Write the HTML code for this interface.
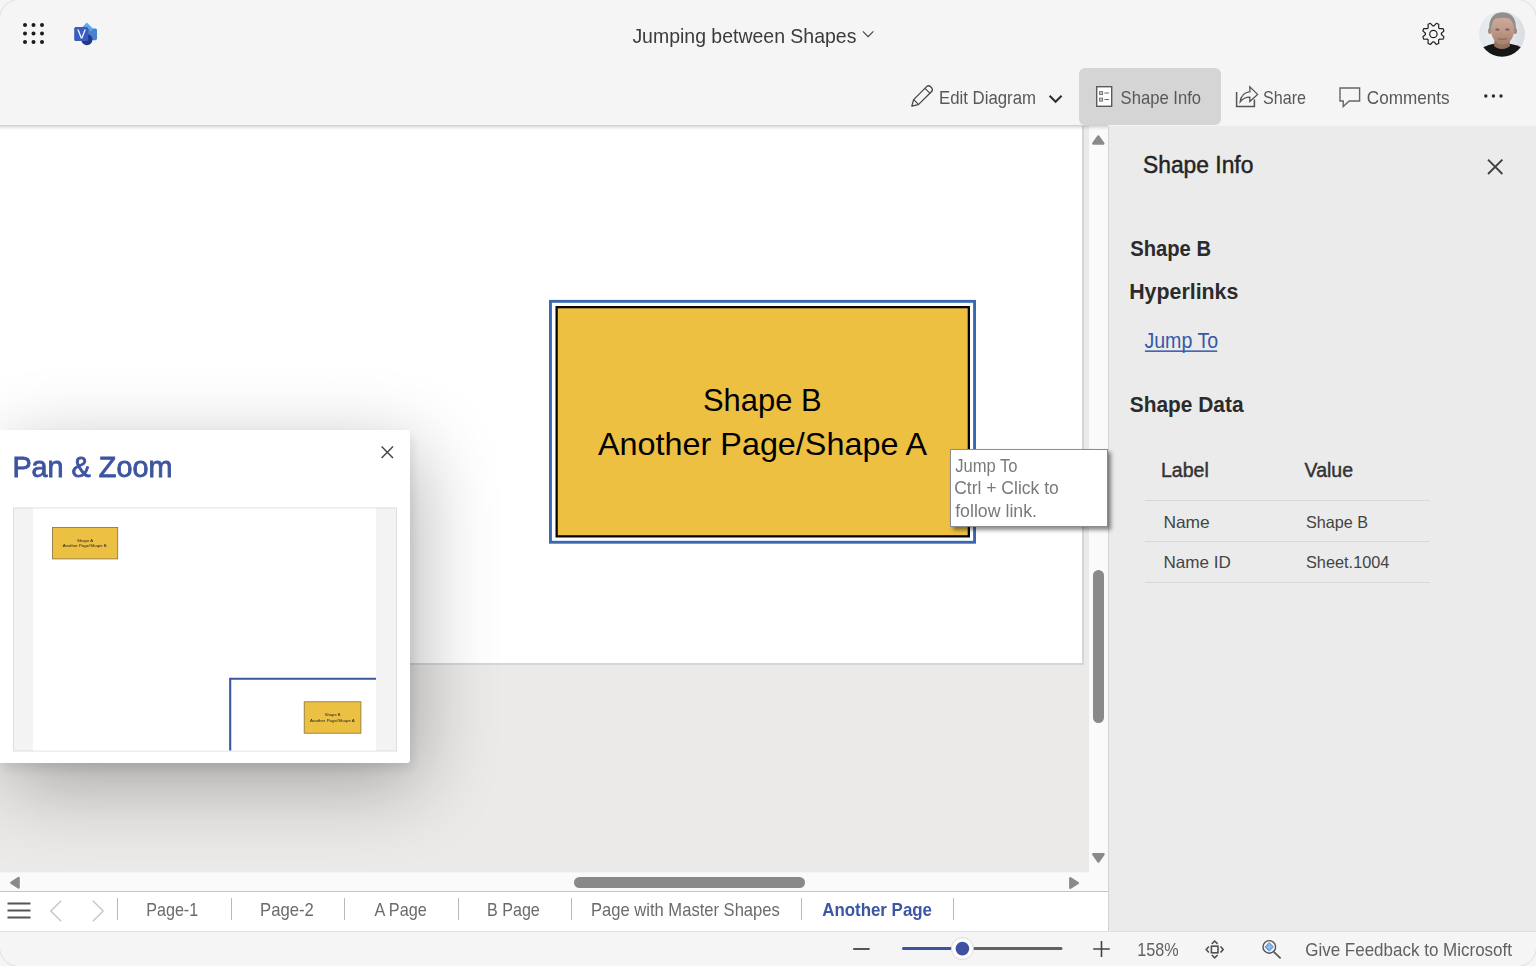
<!DOCTYPE html>
<html><head><meta charset="utf-8"><title>Jumping between Shapes - Visio</title><style>
*{margin:0;padding:0;box-sizing:border-box}
html,body{width:1536px;height:966px;overflow:hidden;background:#f5f5f5;font-family:"Liberation Sans",sans-serif}
.abs{position:absolute}
.lay{position:absolute;overflow:visible}
svg text{font-family:"Liberation Sans",sans-serif}
</style></head><body>
<div class="abs" style="left:1078.5px;top:68px;width:142.5px;height:57px;background:#d5d5d5;border-radius:6px"></div>
<div class="abs" style="left:0;top:126px;width:1089px;height:746px;background:#ebeae8"></div>
<div class="abs" style="left:0;top:126px;width:1084.3px;height:538.6px;background:#fff;border-right:2px solid #d6d6d6;border-bottom:2px solid #d6d6d6"></div>
<div class="abs" style="left:1089px;top:126px;width:19px;height:765px;background:#fafafa"></div>
<div class="abs" style="left:1092.6px;top:570.2px;width:11.6px;height:152.8px;background:#898989;border-radius:6px"></div>
<div class="abs" style="left:0;top:872.6px;width:1108px;height:19px;background:#fafafa"></div>
<div class="abs" style="left:574.1px;top:876.7px;width:230.5px;height:11.1px;background:#898989;border-radius:6px"></div>
<div class="abs" style="left:0;top:125px;width:1108px;height:5px;background:linear-gradient(#dadada 0,#dadada 1px,#e1e1e1 1px,#e1e1e1 2px,#ebebeb 2px,#ebebeb 3px,#f4f4f4 3px,#f4f4f4 4px,#fbfbfb 4px,#fbfbfb 5px);mix-blend-mode:multiply"></div>
<svg class="lay" style="left:0px;top:126px" width="1089" height="746" viewBox="0 126 1089 746"><rect x="550.45" y="301.35" width="424.1" height="240.9" fill="none" stroke="#3a68b0" stroke-width="2.9"/><rect x="556.65" y="307.15" width="412.2" height="229.2" fill="#edc042" stroke="#050505" stroke-width="2.3"/>
<text x="703.00" y="410.82" font-size="31.40" font-weight="normal" fill="#000000" textLength="118.60" lengthAdjust="spacingAndGlyphs">Shape B</text>
<text x="598.00" y="454.85" font-size="31.40" font-weight="normal" fill="#000000" textLength="329.20" lengthAdjust="spacingAndGlyphs">Another Page/Shape A</text></svg>
<svg class="lay" style="left:0;top:0" width="1536" height="966"><path d="M1093.3,143.5 L1103.3,143.5 L1098.3,136.4 Z" fill="#8a8a8a" stroke="#8a8a8a" stroke-width="2.4" stroke-linejoin="round"/><path d="M1093.3,854.2 L1103.5,854.2 L1098.4,861.6 Z" fill="#8a8a8a" stroke="#8a8a8a" stroke-width="2.4" stroke-linejoin="round"/><path d="M11.3,882.8 L18.6,878.1 L18.6,887.6 Z" fill="#8a8a8a" stroke="#8a8a8a" stroke-width="2.4" stroke-linejoin="round"/><path d="M1077.8,883 L1070.3,878.3 L1070.3,887.7 Z" fill="#8a8a8a" stroke="#8a8a8a" stroke-width="2.4" stroke-linejoin="round"/></svg>
<div class="abs" style="left:0;top:429.6px;width:410px;height:333px;background:#fff;border-radius:0 3px 3px 0;box-shadow:8px 22px 80px rgba(0,0,0,0.30),2px 6px 12px rgba(0,0,0,0.10)"></div>
<svg class="lay" style="left:0px;top:429px" width="411" height="334" viewBox="0 429 411 334"><rect x="13.5" y="508" width="383" height="243" fill="#f3f3f3" stroke="#dedede" stroke-width="1"/><rect x="33" y="508.5" width="343" height="242" fill="#fff"/><rect x="52.4" y="527.4" width="65.3" height="31.5" fill="#ecc043" stroke="#857040" stroke-width="0.8"/><text x="77" y="541.6" font-size="4.4" fill="#1a1a1a" textLength="16" lengthAdjust="spacingAndGlyphs">Shape A</text><text x="62.7" y="547.4" font-size="4.4" fill="#1a1a1a" textLength="44" lengthAdjust="spacingAndGlyphs">Another Page/Shape B</text><rect x="304.2" y="701.8" width="56.7" height="31.4" fill="#ecc043" stroke="#857040" stroke-width="0.8"/><text x="324.8" y="716.4" font-size="4.4" fill="#1a1a1a" textLength="15.8" lengthAdjust="spacingAndGlyphs">Shape B</text><text x="310" y="722" font-size="4.4" fill="#1a1a1a" textLength="44.8" lengthAdjust="spacingAndGlyphs">Another Page/Shape A</text><path d="M230.2,750.5 V678.8 H376" fill="none" stroke="#3b57a2" stroke-width="2.1"/><path d="M381.6,446.6 L393,458 M393,446.6 L381.6,458" stroke="#444" stroke-width="1.45"/>
<text x="12.40" y="477.20" font-size="29.07" font-weight="normal" fill="#3d55a0" stroke="#3d55a0" stroke-width="0.85" textLength="160.00" lengthAdjust="spacingAndGlyphs">Pan &amp; Zoom</text></svg>
<div class="abs" style="left:1108px;top:126px;width:428px;height:805px;background:#ebebeb;border-left:1px solid #d4d4d4"></div>
<svg class="lay" style="left:1108px;top:126px" width="428" height="805" viewBox="1108 126 428 805"><path d="M1488,159.6 L1502.4,174 M1502.4,159.6 L1488,174" stroke="#404040" stroke-width="1.9"/><rect x="1144.9" y="350.4" width="72.3" height="1.5" fill="#3559a8"/><path d="M1145,500.5 H1430 M1145,541.5 H1430 M1145,582.5 H1430" stroke="#d8d8d8" stroke-width="1"/>
<text x="1143.00" y="172.55" font-size="23.55" font-weight="normal" fill="#242424" stroke="#242424" stroke-width="0.45" textLength="110.40" lengthAdjust="spacingAndGlyphs">Shape Info</text>
<text x="1130.20" y="255.58" font-size="21.80" font-weight="bold" fill="#2b2b2b" textLength="80.80" lengthAdjust="spacingAndGlyphs">Shape B</text>
<text x="1129.20" y="298.60" font-size="21.80" font-weight="bold" fill="#2b2b2b" textLength="109.20" lengthAdjust="spacingAndGlyphs">Hyperlinks</text>
<text x="1144.40" y="348.20" font-size="21.22" font-weight="normal" fill="#3559a8" textLength="73.80" lengthAdjust="spacingAndGlyphs">Jump To</text>
<text x="1129.80" y="411.70" font-size="21.80" font-weight="bold" fill="#2b2b2b" textLength="113.70" lengthAdjust="spacingAndGlyphs">Shape Data</text>
<text x="1161.00" y="476.70" font-size="19.91" font-weight="normal" fill="#333333" stroke="#333333" stroke-width="0.45" textLength="47.80" lengthAdjust="spacingAndGlyphs">Label</text>
<text x="1304.60" y="476.70" font-size="19.91" font-weight="normal" fill="#333333" stroke="#333333" stroke-width="0.45" textLength="48.40" lengthAdjust="spacingAndGlyphs">Value</text>
<text x="1163.40" y="527.78" font-size="16.72" font-weight="normal" fill="#444444" textLength="46.40" lengthAdjust="spacingAndGlyphs">Name</text>
<text x="1306.00" y="527.70" font-size="16.72" font-weight="normal" fill="#444444" textLength="62.00" lengthAdjust="spacingAndGlyphs">Shape B</text>
<text x="1163.40" y="568.10" font-size="16.72" font-weight="normal" fill="#444444" textLength="67.40" lengthAdjust="spacingAndGlyphs">Name ID</text>
<text x="1306.00" y="568.10" font-size="16.72" font-weight="normal" fill="#444444" textLength="83.40" lengthAdjust="spacingAndGlyphs">Sheet.1004</text></svg>
<div class="abs" style="left:950.3px;top:449.1px;width:157.3px;height:78.2px;background:#fff;border:1px solid #8c8c8c;box-shadow:3px 3px 4px rgba(0,0,0,0.45)"></div>
<svg class="lay" style="left:950px;top:449px" width="158" height="79" viewBox="950 449 158 79">
<text x="955.20" y="471.60" font-size="17.88" font-weight="normal" fill="#7a7a7a" textLength="62.40" lengthAdjust="spacingAndGlyphs">Jump To</text>
<text x="954.20" y="494.10" font-size="17.88" font-weight="normal" fill="#7a7a7a" textLength="104.60" lengthAdjust="spacingAndGlyphs">Ctrl + Click to</text>
<text x="955.20" y="516.80" font-size="17.88" font-weight="normal" fill="#7a7a7a" textLength="81.80" lengthAdjust="spacingAndGlyphs">follow link.</text></svg>
<div class="abs" style="left:0;top:891px;width:1108px;height:1px;background:#c4c4c4"></div>
<div class="abs" style="left:0;top:892px;width:1108px;height:39px;background:#fff"></div>
<div class="abs" style="left:0;top:931px;width:1536px;height:1px;background:#e0e0e0"></div>
<svg class="lay" style="left:0px;top:891px" width="1108" height="41" viewBox="0 891 1108 41"><path d="M7.5,903.4 H30.5 M7.5,910.4 H30.5 M7.5,917.4 H30.5" stroke="#555" stroke-width="2"/><path d="M61.2,900.8 L50.8,911 L61.2,921.2" fill="none" stroke="#c4c4c4" stroke-width="1.3"/><path d="M92.8,900.8 L103.2,911 L92.8,921.2" fill="none" stroke="#c4c4c4" stroke-width="1.3"/><path d="M117.5,898 V920" stroke="#b8b8b8" stroke-width="1"/><path d="M231.5,898 V920" stroke="#b8b8b8" stroke-width="1"/><path d="M344.5,898 V920" stroke="#b8b8b8" stroke-width="1"/><path d="M458.5,898 V920" stroke="#b8b8b8" stroke-width="1"/><path d="M571.5,898 V920" stroke="#b8b8b8" stroke-width="1"/><path d="M801.5,898 V920" stroke="#b8b8b8" stroke-width="1"/><path d="M953.5,898 V920" stroke="#b8b8b8" stroke-width="1"/>
<text x="146.20" y="915.82" font-size="17.59" font-weight="normal" fill="#6b6b6b" textLength="52.00" lengthAdjust="spacingAndGlyphs">Page-1</text>
<text x="260.00" y="915.50" font-size="17.59" font-weight="normal" fill="#6b6b6b" textLength="53.80" lengthAdjust="spacingAndGlyphs">Page-2</text>
<text x="374.40" y="915.50" font-size="17.59" font-weight="normal" fill="#6b6b6b" textLength="52.40" lengthAdjust="spacingAndGlyphs">A Page</text>
<text x="487.00" y="915.50" font-size="17.59" font-weight="normal" fill="#6b6b6b" textLength="52.80" lengthAdjust="spacingAndGlyphs">B Page</text>
<text x="591.00" y="915.50" font-size="17.59" font-weight="normal" fill="#6b6b6b" textLength="188.80" lengthAdjust="spacingAndGlyphs">Page with Master Shapes</text>
<text x="822.20" y="915.50" font-size="17.59" font-weight="bold" fill="#3b56a3" textLength="109.80" lengthAdjust="spacingAndGlyphs">Another Page</text></svg>
<svg class="lay" style="left:0px;top:931px" width="1536" height="35" viewBox="0 931 1536 35"><path d="M853.2,949 H869.6" stroke="#555" stroke-width="2"/><path d="M903.5,948.6 H962" stroke="#3f51a3" stroke-width="3" stroke-linecap="round"/><path d="M962,948.6 H1061" stroke="#616161" stroke-width="3" stroke-linecap="round"/><circle cx="962.4" cy="948.6" r="11" fill="#fff" stroke="#d9d9d9" stroke-width="1"/><circle cx="962.4" cy="948.6" r="6.8" fill="#3f51a3"/><path d="M1093.2,949 H1109.8 M1101.5,941 V957" stroke="#444" stroke-width="1.6"/><rect x="1211.4" y="946.2" width="6.6" height="6.6" fill="none" stroke="#505050" stroke-width="1.6"/><path d="M1211.8,943.8 L1214.7,941 L1217.6,943.8 M1211.8,955 L1214.7,957.8 L1217.6,955 M1208.9,946.5 L1206.2,949.5 L1208.9,952.5 M1220.5,946.5 L1223.2,949.5 L1220.5,952.5" fill="none" stroke="#505050" stroke-width="1.6"/><circle cx="1269.3" cy="946.9" r="6.3" fill="none" stroke="#555" stroke-width="1.4"/><path d="M1273.8,951.8 L1280.6,958.4" stroke="#555" stroke-width="1.7"/><path d="M1269.2,942.6 L1273.4,946.9 L1269.2,951.2 L1265,946.9 Z" fill="#6fa6e6" stroke="#5a97dc" stroke-width="1" stroke-linejoin="round"/><path d="M1269.2,944 V949.8 M1266.4,946.9 H1272" stroke="#c8dcf4" stroke-width="0.6"/>
<text x="1137.20" y="955.60" font-size="17.88" font-weight="normal" fill="#616161" textLength="41.40" lengthAdjust="spacingAndGlyphs">158%</text>
<text x="1305.20" y="955.80" font-size="17.88" font-weight="normal" fill="#616161" textLength="206.80" lengthAdjust="spacingAndGlyphs">Give Feedback to Microsoft</text></svg>
<svg class="lay" style="left:0px;top:0px" width="1536" height="126" viewBox="0 0 1536 126"><circle cx="25.0" cy="25.0" r="2.0" fill="#1a1a1a"/><circle cx="25.0" cy="33.4" r="2.0" fill="#1a1a1a"/><circle cx="25.0" cy="41.9" r="2.0" fill="#1a1a1a"/><circle cx="33.5" cy="25.0" r="2.0" fill="#1a1a1a"/><circle cx="33.5" cy="33.4" r="2.0" fill="#1a1a1a"/><circle cx="33.5" cy="41.9" r="2.0" fill="#1a1a1a"/><circle cx="42.0" cy="25.0" r="2.0" fill="#1a1a1a"/><circle cx="42.0" cy="33.4" r="2.0" fill="#1a1a1a"/><circle cx="42.0" cy="41.9" r="2.0" fill="#1a1a1a"/><rect x="85" y="28.4" width="12" height="11.8" rx="1.6" fill="#4b7fd0"/><path d="M80.5,29 L86.8,22.6 L93.2,28.8 L90,32 L90,29 Z" fill="#62a6ec"/><circle cx="86.9" cy="39.6" r="5.6" fill="#22398a"/><rect x="74.2" y="27" width="14" height="14" rx="1.5" fill="#3a5cc0"/><path d="M77.2,29.6 L80.8,38.4 L82.4,38.4 L85.9,29.6 L84.5,29.6 L81.6,36.9 L78.7,29.6 Z" fill="#f4f6fb"/><path d="M862.9,31.3 L868.1,36.6 L873.4,31.3" fill="none" stroke="#444" stroke-width="1.15"/><path d="M1433.40,25.90 L1434.03,25.92 L1436.39,23.31 L1438.77,24.30 L1438.60,27.82 L1439.06,28.24 L1439.48,28.70 L1443.00,28.53 L1443.99,30.91 L1441.38,33.27 L1441.40,33.90 L1441.38,34.53 L1443.99,36.89 L1443.00,39.27 L1439.48,39.10 L1439.06,39.56 L1438.60,39.98 L1438.77,43.50 L1436.39,44.49 L1434.03,41.88 L1433.40,41.90 L1432.77,41.88 L1430.41,44.49 L1428.03,43.50 L1428.20,39.98 L1427.74,39.56 L1427.32,39.10 L1423.80,39.27 L1422.81,36.89 L1425.42,34.53 L1425.40,33.90 L1425.42,33.27 L1422.81,30.91 L1423.80,28.53 L1427.32,28.70 L1427.74,28.24 L1428.20,27.82 L1428.03,24.30 L1430.41,23.31 L1432.77,25.92 Z" fill="none" stroke="#202020" stroke-width="1.2" stroke-linejoin="round"/><circle cx="1433.4" cy="34" r="3.7" fill="none" stroke="#202020" stroke-width="1.2"/><defs><clipPath id="av"><circle cx="1502" cy="33.9" r="22.9"/></clipPath><linearGradient id="avbg" x1="0" y1="0" x2="1" y2="0"><stop offset="0" stop-color="#e4e7ea"/><stop offset="0.5" stop-color="#eef0f2"/><stop offset="1" stop-color="#d6dadf"/></linearGradient><linearGradient id="face" x1="0" y1="0" x2="0" y2="1"><stop offset="0" stop-color="#d2ad9e"/><stop offset="0.5" stop-color="#bf9a8a"/><stop offset="1" stop-color="#a5806f"/></linearGradient><filter id="avb" x="-20%" y="-20%" width="140%" height="140%"><feGaussianBlur stdDeviation="0.45"/></filter></defs><g clip-path="url(#av)"><rect x="1478" y="10" width="48" height="48" fill="url(#avbg)"/><g filter="url(#avb)"><path d="M1480,49 C1486,45.5 1492,44 1496,43.6 L1508,43.6 C1513,44.2 1519,46 1525,49.5 L1526,60 L1478,60 Z" fill="#141414"/><path d="M1494.5,40 L1509.5,40 L1510,46 C1506,50 1498,50 1494,46 Z" fill="#94725f"/><ellipse cx="1489.8" cy="31" rx="1.8" ry="3" fill="#b08a7a"/><ellipse cx="1515.2" cy="31" rx="1.8" ry="3" fill="#a88272"/><path d="M1490.6,27 C1490.6,19 1495,15.5 1502.5,15.5 C1510,15.5 1514.6,19 1514.6,27 C1514.6,36 1510.6,44.4 1502.6,44.8 C1494.4,44.4 1490.6,36 1490.6,27 Z" fill="url(#face)"/><path d="M1489.4,31 C1488.2,21 1491.6,12.4 1502.6,12.2 C1513.4,12.4 1516.8,20.5 1515.8,31 L1514.4,31 C1514,24.5 1512,19.4 1508.6,18.4 C1504.6,17.4 1499.6,17.4 1496,18.6 C1492.8,19.8 1491.4,25 1491,31 Z" fill="#8f8f8f"/><ellipse cx="1497.4" cy="29.6" rx="2.2" ry="1.1" fill="#5e4a44" opacity="0.75"/><ellipse cx="1507.4" cy="29.6" rx="2.2" ry="1.1" fill="#5e4a44" opacity="0.75"/><path d="M1498,38.6 q4.5,1.4 9,0" stroke="#8e5f55" stroke-width="1.2" fill="none" opacity="0.8"/></g></g><path d="M911.8,106.2 L913.6,99.6 L926.6,86.6 Q928.6,84.8 930.6,86.8 L931.6,87.8 Q933.4,89.8 931.4,91.8 L918.4,104.6 Z" fill="none" stroke="#444" stroke-width="1.25" stroke-linejoin="round"/><path d="M913.8,99.6 L918.4,104.4 M925,88.4 L929.8,93.2" stroke="#444" stroke-width="1.1"/><path d="M1049.6,95.8 L1055.6,101.8 L1061.6,95.8" fill="none" stroke="#2e2e2e" stroke-width="2"/><rect x="1096.7" y="86.7" width="15" height="19.6" fill="#fff" stroke="#5a5a5a" stroke-width="1.4"/><rect x="1099.6" y="91.6" width="3" height="3" fill="#ccc" stroke="#6a6a6a" stroke-width="0.9"/><rect x="1099.6" y="98.1" width="3" height="3" fill="#ccc" stroke="#6a6a6a" stroke-width="0.9"/><path d="M1104.4,93 H1109 M1104.4,99.5 H1109" stroke="#6a6a6a" stroke-width="1"/><path d="M1236.6,92 V106.4 H1254.4 V99.6" fill="none" stroke="#555" stroke-width="1.5"/><path d="M1240.2,101.8 C1240.8,95.6 1244.6,92.4 1250,91.6 L1249.8,86.8 L1257.6,94.4 L1249.8,101.6 L1249.8,97.2 C1245.6,97.2 1242.6,98.8 1240.2,101.8 Z" fill="none" stroke="#555" stroke-width="1.3" stroke-linejoin="miter"/><path d="M1340,88 H1359.6 V101 H1349.2 L1343.2,106.6 V101 H1340 Z" fill="none" stroke="#666" stroke-width="1.4" stroke-linejoin="miter"/><circle cx="1485.8" cy="96" r="1.7" fill="#2a2a2a"/><circle cx="1493.4" cy="96" r="1.7" fill="#2a2a2a"/><circle cx="1501.0" cy="96" r="1.7" fill="#2a2a2a"/>
<text x="632.40" y="42.70" font-size="20.93" font-weight="normal" fill="#3b3b3b" textLength="224.00" lengthAdjust="spacingAndGlyphs">Jumping between Shapes</text>
<text x="939.00" y="103.80" font-size="17.88" font-weight="normal" fill="#585858" textLength="97.00" lengthAdjust="spacingAndGlyphs">Edit Diagram</text>
<text x="1120.60" y="103.50" font-size="18.31" font-weight="normal" fill="#585858" textLength="80.40" lengthAdjust="spacingAndGlyphs">Shape Info</text>
<text x="1263.00" y="103.70" font-size="18.31" font-weight="normal" fill="#585858" textLength="43.00" lengthAdjust="spacingAndGlyphs">Share</text>
<text x="1366.80" y="103.63" font-size="17.88" font-weight="normal" fill="#585858" textLength="82.70" lengthAdjust="spacingAndGlyphs">Comments</text></svg>
<div class="abs" style="left:-1px;top:-1px;width:1538px;height:968px;border:1.3px solid rgba(0,0,0,0.09);border-radius:20px;pointer-events:none"></div>
</body></html>
